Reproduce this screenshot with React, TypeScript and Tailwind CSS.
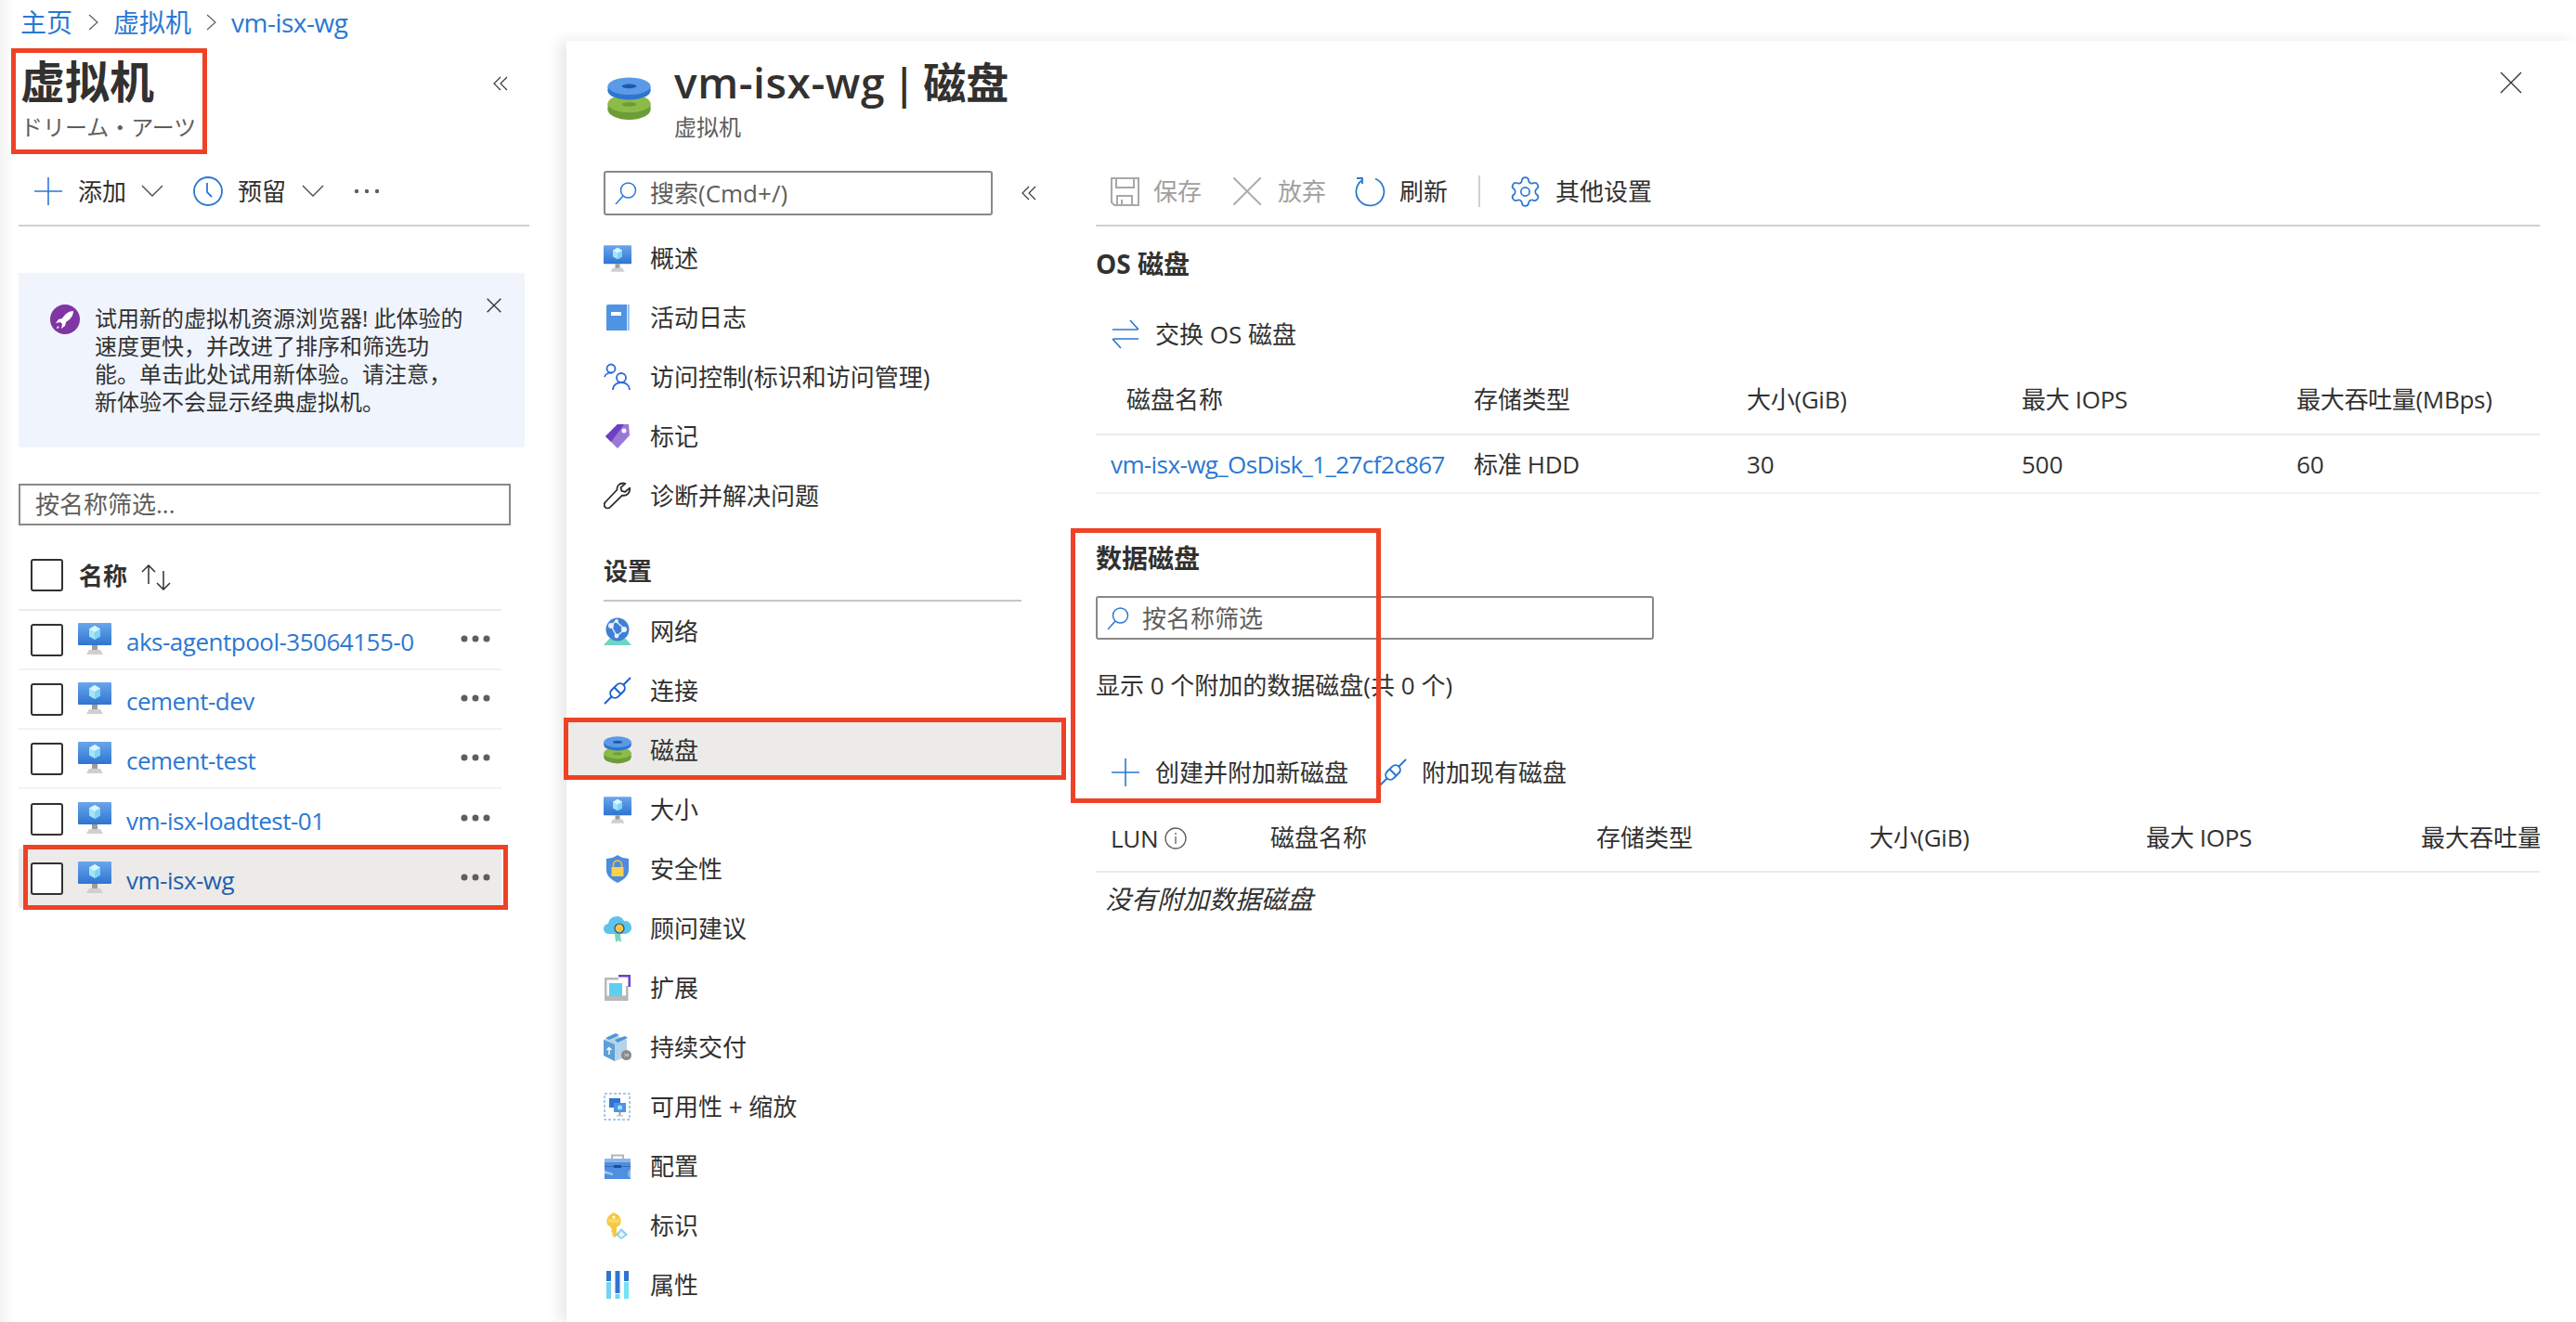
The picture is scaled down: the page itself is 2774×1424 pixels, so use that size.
import { Settings } from "lucide-react";

const BLUE = "#2b78d2";

function CloseIcon({ className, color = "#323130", width = 1.5 }: { className: string; color?: string; width?: number }) {
  return (
    <svg viewBox="0 0 24 24" fill="none" stroke={color} strokeWidth={width} className={`${className} shrink-0`}>
      <path d="M1 1l22 22M23 1 1 23" />
    </svg>
  );
}

function VmIcon({ className = "w-[36px] h-[34px]" }: { className?: string }) {
  return (
    <svg viewBox="0 0 36 34" className={`${className} shrink-0`}>
      <defs>
        <linearGradient id="vmg" x1="0" y1="0" x2="0" y2="1">
          <stop offset="0" stopColor="#6aa6ec" />
          <stop offset="1" stopColor="#2f74d0" />
        </linearGradient>
      </defs>
      <rect x="0" y="0" width="36" height="24" rx="1" fill="url(#vmg)" />
      <polygon points="18,3 24,6.5 24,14.5 18,18 12,14.5 12,6.5" fill="#a5e4fb" />
      <polygon points="18,3 24,6.5 18,10 12,6.5" fill="#d9f5ff" />
      <polygon points="18,10 24,6.5 24,14.5 18,18" fill="#7fd5f5" />
      <rect x="15" y="24" width="6" height="6" fill="#9d9d9d" />
      <polygon points="9,34 27,34 24,29 12,29" fill="#cfcfcf" />
    </svg>
  );
}

function DiskIcon({ className = "w-[30px] h-[30px]" }: { className?: string }) {
  return (
    <svg viewBox="0 0 48 48" className={`${className} shrink-0`}>
      <ellipse cx="24" cy="36" rx="23.5" ry="11" fill="#6d9c38" />
      <rect x="0.5" y="29" width="47" height="7" fill="#6d9c38" />
      <ellipse cx="24" cy="29" rx="23.5" ry="10" fill="#8cbc47" />
      <ellipse cx="24" cy="30" rx="8" ry="2.4" fill="#6d9c38" />
      <ellipse cx="24" cy="15" rx="23.5" ry="10" fill="#2f74d0" />
      <rect x="0.5" y="10" width="47" height="5" fill="#2f74d0" />
      <ellipse cx="24" cy="10" rx="23.5" ry="9.5" fill="#5b9ae6" />
      <ellipse cx="24" cy="10" rx="8" ry="2.4" fill="#1f5aa8" />
    </svg>
  );
}

function BookIcon() {
  return (
    <svg viewBox="0 0 30 30" className="w-[30px] h-[30px] shrink-0">
      <path d="M5 1h20v28H3V3a2 2 0 0 1 2-2z" fill="#4f94e2" />
      <path d="M25 1h2v28h-2z" fill="#d6e8fa" />
      <path d="M27 1v28" stroke="#4f94e2" strokeWidth="1" />
      <rect x="8" y="9" width="11" height="4" fill="#fff" />
    </svg>
  );
}

function PeopleIcon() {
  return (
    <svg viewBox="0 0 30 30" fill="none" stroke="#2a6bd8" strokeWidth="1.8" className="w-[30px] h-[30px] shrink-0">
      <circle cx="8" cy="6" r="4.5" />
      <path d="M1 15c1-3 4-5 8-4" />
      <circle cx="19" cy="16" r="5" />
      <path d="M10 29c0-5 4-8 9-8s9 3 9 8" />
    </svg>
  );
}

function TagIcon() {
  return (
    <svg viewBox="0 0 30 30" className="w-[30px] h-[30px] shrink-0">
      <path d="M2 15 15 2h12l1 12-13 14z" fill="#9a78d8" />
      <path d="M2 15 15 2h7L8 21z" fill="#6c3fc4" />
      <circle cx="22" cy="9" r="2.5" fill="#fff" />
    </svg>
  );
}

function WrenchIcon() {
  return (
    <svg viewBox="0 0 30 30" fill="none" stroke="#2c2c2c" strokeWidth="1.8" strokeLinejoin="round" className="w-[30px] h-[30px] shrink-0">
      <path d="M21 1.5c-4 0-7 3-6.5 7L1.8 22a3.6 3.6 0 0 0 5.2 5.4l13-12.8c5 1 8.8-3 8.2-8l-5 4.2-3.8-1-.9-3.6 4.9-4.4a9 9 0 0 0-2.4-.3z" />
    </svg>
  );
}

function GlobeIcon() {
  return (
    <svg viewBox="0 0 30 30" className="w-[30px] h-[30px] shrink-0">
      <polygon points="0,30 30,30 24,23 6,23" fill="#6fd6c2" />
      <circle cx="15" cy="13" r="12.5" fill="#3f80d6" />
      <g stroke="#dbe9f8" strokeWidth="1.5">
        <path d="M8 9 14 20 23 13 13 4z" fill="none" />
      </g>
      <circle cx="8" cy="9" r="3" fill="#f0f0f0" />
      <circle cx="22" cy="13" r="3" fill="#f0f0f0" />
      <circle cx="14" cy="20" r="2.4" fill="#f0f0f0" />
      <circle cx="14" cy="4" r="2" fill="#f0f0f0" />
    </svg>
  );
}

function PlugIcon({ color = "#2060d0" }: { color?: string }) {
  return (
    <svg viewBox="0 0 30 30" fill="none" stroke={color} strokeWidth="2" className="w-[30px] h-[30px] shrink-0">
      <rect x="6" y="10" width="18" height="10" rx="5" transform="rotate(-45 15 15)" />
      <path d="M11 11 19 19M1 29l7.500-7.500M21.500 8.500 29 1" />
    </svg>
  );
}

function ShieldIcon() {
  return (
    <svg viewBox="0 0 30 30" className="w-[30px] h-[30px] shrink-0">
      <path d="M15 0c4 3 8 3.500 12 4v12c0 7-6 11-12 14C9 27 3 23 3 16V4c4-.5 8-1 12-4z" fill="#4a8cdf" />
      <path d="M10.500 13v-2.500a4.500 4.500 0 0 1 9 0V13" fill="none" stroke="#e8b93a" strokeWidth="1.8" />
      <rect x="8.500" y="13" width="13" height="10" fill="#f8d24c" />
    </svg>
  );
}

function AdvisorIcon() {
  return (
    <svg viewBox="0 0 30 30" className="w-[30px] h-[30px] shrink-0">
      <path d="M6 21a5.500 5.500 0 0 1-1-11 9 9 0 0 1 17-3 7 7 0 0 1 2 14z" fill="#5cc4ea" />
      <path d="M12 21 13 30l3-2 3 2-1-9z" fill="#74d8bd" />
      <circle cx="17" cy="15" r="5" fill="#f6c83e" stroke="#2c4a8c" strokeWidth="1.2" />
    </svg>
  );
}

function ExtensionIcon() {
  return (
    <svg viewBox="0 0 30 30" className="w-[30px] h-[30px] shrink-0">
      <path d="M2 5h15v2.500H4.500v17H25V14h2.500v16H2z" fill="#b8b8b8" transform="translate(-1 -1)" />
      <rect x="6" y="10" width="14" height="14" fill="#5ecfef" />
      <path d="M16 1h13v13h-2.500V3.500H16z" fill="#6b3fd0" />
    </svg>
  );
}

function BoxIcon() {
  return (
    <svg viewBox="0 0 30 30" className="w-[30px] h-[30px] shrink-0">
      <polygon points="0,7 12,2 25,7 25,25 12,30 0,24" fill="#b5d4ec" />
      <polygon points="0,7 12,12 12,30 0,24" fill="#5d9fd8" />
      <polygon points="2,5 13,0 17,2 6,7" fill="#4f94d6" />
      <polygon points="12,7 23,3 26,5 15,10" fill="#4f94d6" />
      <path d="M6 23v-7M3.500 18 6 15.500 8.500 18" stroke="#fff" strokeWidth="1.400" fill="none" />
      <circle cx="24.500" cy="23.500" r="5.500" fill="#8a8a8a" />
      <path d="M22.500 22l2 1.500-2 1.500M25 22l2 1.500-2 1.500" stroke="#fff" strokeWidth="0.800" fill="none" />
    </svg>
  );
}

function ScaleIcon() {
  return (
    <svg viewBox="0 0 30 30" className="w-[30px] h-[30px] shrink-0">
      <rect x="1" y="1" width="27" height="28" fill="none" stroke="#4f94e2" strokeWidth="1" strokeDasharray="3 2" />
      <rect x="6" y="6" width="12" height="10" fill="#2f74d0" />
      <rect x="11" y="11" width="13" height="10" fill="#4f94e2" />
      <circle cx="17.500" cy="16" r="2.500" fill="#a5e4fb" />
      <rect x="16.500" y="21" width="2" height="3" fill="#9d9d9d" />
      <rect x="14" y="24" width="7" height="1.500" fill="#c4c4c4" />
    </svg>
  );
}

function ToolboxIcon() {
  return (
    <svg viewBox="0 0 30 30" className="w-[30px] h-[30px] shrink-0">
      <path d="M9 8V3.500h12V8" fill="none" stroke="#b5b5b5" strokeWidth="2" />
      <rect x="1" y="7" width="28" height="22" fill="#4f8fe0" />
      <rect x="1" y="7" width="28" height="4" fill="#8ab6ec" />
      <rect x="1" y="15" width="28" height="1" fill="#2f6cc0" />
      <rect x="11" y="14" width="8" height="3" fill="#1f4f98" />
      <path d="M1 20l9 3v2l-9-2z" fill="#a6c8f0" />
      <path d="M29 19c-4 0-4 8 0 9z" fill="#8ab6ec" />
    </svg>
  );
}

function KeyIcon() {
  return (
    <svg viewBox="0 0 30 30" className="w-[30px] h-[30px] shrink-0">
      <path d="M11 1c6 3 9 6 7 13l-4 3v9l-2 2-3-3 1-2-2-1 1-2-1-2V17L4 14C2 8 5 4 11 1z" fill="#f6c83e" />
      <circle cx="11" cy="6" r="1.500" fill="#fff" />
      <path d="M5 9h12M5 11h12" stroke="#fbe7a0" strokeWidth="1" />
      <polygon points="19,18 26,25 19,30 13,25" fill="#8fcdf0" />
      <polygon points="19,21 23,25 19,28 16,25" fill="#e6f5fd" />
    </svg>
  );
}

function BarsIcon() {
  return (
    <svg viewBox="0 0 30 30" className="w-[30px] h-[30px] shrink-0">
      <rect x="3" y="0" width="5" height="11" fill="#2f74d0" />
      <rect x="3" y="12" width="5" height="18" fill="#72d4ee" />
      <rect x="12.500" y="0" width="5" height="24" fill="#2f74d0" />
      <rect x="12.500" y="25" width="5" height="5" fill="#72d4ee" />
      <rect x="22" y="0" width="5" height="11" fill="#2f74d0" />
      <rect x="22" y="12" width="5" height="18" fill="#72e4f6" />
    </svg>
  );
}

function RocketBadge() {
  return (
    <svg viewBox="0 0 32 32" className="w-[32px] h-[32px] shrink-0">
      <circle cx="16" cy="16" r="16" fill="#7f35a3" />
      <path d="M25 7c-5 0-9 3-12 8l-4 1-3 4 5-1 2 2-1 5 4-3 1-4c5-3 8-7 8-12z" fill="#fff" />
      <path d="M8 23l-1 3 3-1z" fill="#fff" />
    </svg>
  );
}

function PlusIcon({ className }: { className: string }) {
  return (
    <svg viewBox="0 0 30 30" fill="none" stroke={BLUE} strokeWidth="1.6" className={`${className} shrink-0`}>
      <path d="M15 0v30M0 15h30" />
    </svg>
  );
}

function Chevron() {
  return (
    <svg viewBox="0 0 24 13" fill="none" stroke="#4a4a4a" strokeWidth="1.4" className="w-[24px] h-[13px] shrink-0">
      <path d="M1 1l11 11L23 1" />
    </svg>
  );
}

function ClockIcon() {
  return (
    <svg viewBox="0 0 32 32" fill="none" stroke={BLUE} strokeWidth="1.8" className="w-[32px] h-[32px] shrink-0">
      <circle cx="16" cy="16" r="15" />
      <path d="M15 7v10l5 5" />
    </svg>
  );
}

function DoubleLeft({ className }: { className: string }) {
  return (
    <svg viewBox="0 0 16 16" fill="none" stroke="#323130" strokeWidth="1.1" className={`${className} shrink-0`}>
      <path d="M8 1 1 8l7 7M15 1 8 8l7 7" />
    </svg>
  );
}

function SearchIcon() {
  return (
    <svg viewBox="0 0 24 24" fill="none" stroke={BLUE} strokeWidth="1.500" className="w-[24px] h-[24px] shrink-0">
      <circle cx="14.500" cy="9" r="8" />
      <path d="M9 15 1 24" />
    </svg>
  );
}

function SaveIcon() {
  return (
    <svg viewBox="0 0 33 33" fill="none" stroke="#a8a8a8" strokeWidth="2" className="w-[33px] h-[33px] shrink-0">
      <path d="M2 2h29v29H5l-3-3z" />
      <path d="M7 2v10h19V2M8 31V21h16v10M13 31v-6" />
    </svg>
  );
}

function RefreshIcon() {
  return (
    <svg viewBox="0 0 34 34" fill="none" stroke={BLUE} strokeWidth="1.800" className="w-[34px] h-[34px] shrink-0">
      <path d="M23 3.500a15 15 0 1 1-14 1.500" />
      <path d="M3 3h6v6" />
    </svg>
  );
}

function SwapIcon() {
  return (
    <svg viewBox="0 0 30 32" fill="none" stroke={BLUE} strokeWidth="1.700" className="w-[30px] h-[32px] shrink-0">
      <path d="M1 11h27M20 1l9 10M29 21H2M10 31 1 21" />
    </svg>
  );
}

function SortIcon() {
  return (
    <svg viewBox="0 0 32 28" fill="none" stroke="#323130" strokeWidth="1.500" className="w-[32px] h-[28px] shrink-0">
      <path d="M8 21V1M1 8l7-7 7 7M24 7v20M17 20l7 7 7-7" />
    </svg>
  );
}

function InfoIcon() {
  return (
    <svg viewBox="0 0 24 24" fill="none" stroke="#605e5c" strokeWidth="1.300" className="w-[24px] h-[24px] shrink-0">
      <circle cx="12" cy="12" r="11" />
      <path d="M12 10v8M12 6v2" />
    </svg>
  );
}

function Dots({ small }: { small?: boolean }) {
  if (small) {
    return (
      <svg viewBox="0 0 28 6" className="w-[28px] h-[6px] shrink-0" fill="#605e5c">
        <circle cx="3" cy="3" r="2.200" />
        <circle cx="14" cy="3" r="2.200" />
        <circle cx="25" cy="3" r="2.200" />
      </svg>
    );
  }
  return (
    <svg viewBox="0 0 32 8" className="w-[32px] h-[8px] shrink-0" fill="#605e5c">
      <circle cx="4" cy="4" r="3.500" />
      <circle cx="16" cy="4" r="3.500" />
      <circle cx="28" cy="4" r="3.500" />
    </svg>
  );
}

function Checkbox() {
  return <div className="w-[35px] h-[35px] shrink-0 bg-white border-2 border-[#323130] rounded-[3px]" />;
}

function RedBox({ className }: { className: string }) {
  return <div className={`absolute border-[5px] border-[#ee4226] pointer-events-none ${className}`} />;
}

const VMS = ["aks-agentpool-35064155-0", "cement-dev", "cement-test", "vm-isx-loadtest-01", "vm-isx-wg"];

function VmList() {
  return (
    <aside className="w-[610px] shrink-0 pl-[20px] bg-[linear-gradient(90deg,#f3f3f3,#ffffff_16px)]">
      {/* Breadcrumb */}
      <nav className="h-[48px] flex items-center text-[28px] text-[#2b78d2] pl-[2px]">
        <span>主页</span>
        <svg viewBox="0 0 11 18" fill="none" stroke="#605e5c" strokeWidth="1.2" className="w-[11px] h-[18px] ml-[17px] mr-[16px]"><path d="M1 1l9 8-9 8" /></svg>
        <span>虚拟机</span>
        <svg viewBox="0 0 11 18" fill="none" stroke="#605e5c" strokeWidth="1.2" className="w-[11px] h-[18px] ml-[16px] mr-[16px]"><path d="M1 1l9 8-9 8" /></svg>
        <span className="tracking-[-0.5px]">vm-isx-wg</span>
      </nav>

      {/* Title */}
      <div className="relative h-[105px] w-[550px] flex justify-between">
        <RedBox className="left-[-8px] top-[4px] w-[211px] h-[114px]" />
        <div className="pt-[11px] pl-[2px]">
          <h1 className="text-[48px] leading-[58px] font-bold text-[#323130]">虚拟机</h1>
          <p className="text-[24px] leading-[32px] mt-[4px] text-[#605e5c]">ドリーム・アーツ</p>
        </div>
        <DoubleLeft className="w-[16px] h-[16px] mt-[34px] mr-[23px]" />
      </div>

      {/* Toolbar */}
      <div className="h-[91px] w-[550px] border-b-2 border-[#d2d0ce] flex items-center pt-[16px] pl-[17px] text-[26px] text-[#323130]">
        <PlusIcon className="w-[30px] h-[30px]" />
        <span className="ml-[17px]">添加</span>
        <span className="ml-[16px]"><Chevron /></span>
        <span className="ml-[32px]"><ClockIcon /></span>
        <span className="ml-[16px]">预留</span>
        <span className="ml-[17px]"><Chevron /></span>
        <span className="ml-[32px]"><Dots small /></span>
      </div>

      {/* Banner */}
      <div className="relative mt-[50px] w-[545px] h-[188px] bg-[#eff4fd] rounded-[2px] flex pl-[34px] pt-[34px] gap-[16px]">
        <RocketBadge />
        <p className="text-[24px] leading-[30px] text-[#323130] whitespace-nowrap">
          试用新的虚拟机资源浏览器! 此体验的<br />
          速度更快，并改进了排序和筛选功<br />
          能。单击此处试用新体验。请注意，<br />
          新体验不会显示经典虚拟机。
        </p>
        <CloseIcon className="absolute right-[25px] top-[27px] w-[16px] h-[16px]" width={2} />
      </div>

      {/* Filter */}
      <div className="mt-[39px] w-[530px] h-[45px] border-2 border-[#8a8886] flex items-center pl-[16px] pb-[2px] text-[26px] text-[#605e5c]">
        按名称筛选...
      </div>

      {/* List */}
      <div className="w-[520px] h-[92px] pt-[36px] border-b-2 border-[#edebe9] flex items-start pl-[13px] text-[26px]">
        <Checkbox />
        <span className="ml-[17px] mt-[2px] font-bold text-[#323130]">名称</span>
        <span className="ml-[15px] mt-[6px]"><SortIcon /></span>
      </div>
      {VMS.map((vm, i) => {
        const selected = vm === "vm-isx-wg";
        return (
          <div
            key={vm}
            className={`relative w-[520px] h-[64px] flex items-center pl-[13px] pr-[12px] text-[26px] ${
              selected ? "bg-[#edebe9] text-[#1f5fae]" : "text-[#2b78d2]"
            } ${i < VMS.length - 2 ? "border-b-2 border-[#f3f2f1]" : ""}`}
          >
            {selected && <RedBox className="left-[5px] right-[-7px] top-[-4px] bottom-[-2px]" />}
            <Checkbox />
            <span className="ml-[16px] -mt-[2px]"><VmIcon /></span>
            <span className="ml-[16px] mt-[4px] tracking-[-0.5px]">{vm}</span>
            <span className="ml-auto -mt-[2px]"><Dots /></span>
          </div>
        );
      })}
    </aside>
  );
}

const MENU_TOP = [
  { label: "概述", icon: <VmIcon className="w-[30px] h-[29px]" /> },
  { label: "活动日志", icon: <BookIcon /> },
  { label: "访问控制(标识和访问管理)", icon: <PeopleIcon /> },
  { label: "标记", icon: <TagIcon /> },
  { label: "诊断并解决问题", icon: <WrenchIcon /> },
];

const MENU_SETTINGS = [
  { label: "网络", icon: <GlobeIcon /> },
  { label: "连接", icon: <PlugIcon /> },
  { label: "磁盘", icon: <DiskIcon />, selected: true },
  { label: "大小", icon: <VmIcon className="w-[30px] h-[29px]" /> },
  { label: "安全性", icon: <ShieldIcon /> },
  { label: "顾问建议", icon: <AdvisorIcon /> },
  { label: "扩展", icon: <ExtensionIcon /> },
  { label: "持续交付", icon: <BoxIcon /> },
  { label: "可用性 + 缩放", icon: <ScaleIcon /> },
  { label: "配置", icon: <ToolboxIcon /> },
  { label: "标识", icon: <KeyIcon /> },
  { label: "属性", icon: <BarsIcon /> },
];

function MenuRow({ label, icon, selected }: { label: string; icon: React.ReactNode; selected?: boolean }) {
  return (
    <div
      className={`relative h-[64px] flex items-center gap-[20px] text-[26px] text-[#323130] ${
        selected ? "bg-[#edebe9] -ml-[40px] pl-[40px] w-[538px]" : "w-[498px]"
      }`}
    >
      {selected && <RedBox className="left-[-3px] right-0 top-[-3px] bottom-0" />}
      {icon}
      <span>{label}</span>
    </div>
  );
}

function ResourceMenu() {
  return (
    <div className="w-[570px] shrink-0 pl-[40px]">
      <div className="mt-[18px] flex items-center">
        <div className="w-[419px] h-[48px] border-2 border-[#8a8886] rounded-[3px] flex items-center pl-[10px] gap-[14px] text-[26px] text-[#605e5c]">
          <SearchIcon />
          <span>搜索(Cmd+/)</span>
        </div>
        <DoubleLeft className="w-[16px] h-[16px] ml-[31px]" />
      </div>
      <div className="mt-[14px]">
        {MENU_TOP.map((m) => (
          <MenuRow key={m.label} label={m.label} icon={m.icon} />
        ))}
      </div>
      <div className="h-[82px] w-[450px] border-b-2 border-[#c8c6c4] flex items-end pb-[15px] text-[26px] font-bold text-[#323130]">设置</div>
      {MENU_SETTINGS.map((m) => (
        <MenuRow key={m.label} label={m.label} icon={m.icon} selected={m.selected} />
      ))}
    </div>
  );
}

function DiskContent() {
  return (
    <div className="relative w-[1555px] shrink-0">
      <div className="overflow-hidden text-[26px] text-[#323130] whitespace-nowrap">
        {/* Command bar */}
        <div className="h-[78px] pt-[4px] border-b-2 border-[#d2d0ce] flex items-center pl-[15px]">
          <SaveIcon />
          <span className="ml-[14px] text-[#a19f9d]">保存</span>
          <CloseIcon className="ml-[33px] w-[32px] h-[32px]" color="#a8a8a8" width={1.5} />
          <span className="ml-[17px] text-[#a19f9d]">放弃</span>
          <span className="ml-[30px]"><RefreshIcon /></span>
          <span className="ml-[15px]">刷新</span>
          <span className="ml-[33px] w-[2px] h-[34px] bg-[#d2d0ce]" />
          <Settings strokeWidth={1.1} className="ml-[30px] w-[37px] h-[37px] text-[#2b78d2]" />
          <span className="ml-[14px]">其他设置</span>
        </div>

        <h2 className="mt-[22px] h-[36px] leading-[36px] text-[28px] font-bold">OS 磁盘</h2>
        <div className="mt-[28px] h-[60px] flex items-center pl-[17px] gap-[17px]">
          <SwapIcon />
          <span>交换 OS 磁盘</span>
        </div>

        {/* OS disk table */}
        <div className="grid grid-cols-[407px_294px_296px_296px_1fr] h-[79px] pt-[2px] items-center border-b-2 border-[#edebe9]">
          <span className="pl-[33px]">磁盘名称</span>
          <span>存储类型</span>
          <span className="tracking-[-0.3px]">大小(GiB)</span>
          <span className="tracking-[-0.3px]">最大 IOPS</span>
          <span className="tracking-[-0.3px]">最大吞吐量(MBps)</span>
        </div>
        <div className="grid grid-cols-[407px_294px_296px_296px_1fr] h-[63px] items-center border-b-2 border-[#f3f2f1]">
          <span className="pl-[16px] text-[#2b78d2] tracking-[-0.6px]">vm-isx-wg_OsDisk_1_27cf2c867</span>
          <span className="tracking-[-0.3px]">标准 HDD</span>
          <span>30</span>
          <span>500</span>
          <span>60</span>
        </div>

        {/* Data disks */}
        <h2 className="mt-[51px] h-[36px] leading-[36px] text-[28px] font-bold">数据磁盘</h2>
        <div className="mt-[23px] w-[601px] h-[47px] border-2 border-[#8a8886] rounded-[3px] flex items-center pl-[10px] gap-[14px] text-[#605e5c]">
          <SearchIcon />
          <span>按名称筛选</span>
        </div>
        <p className="mt-[33px] leading-[32px]">显示 0 个附加的数据磁盘(共 0 个)</p>
        <div className="mt-[48px] h-[60px] flex items-center pl-[17px]">
          <PlusIcon className="w-[30px] h-[30px]" />
          <span className="ml-[17px]">创建并附加新磁盘</span>
          <span className="ml-[33px]"><PlugIcon color="#2b78d2" /></span>
          <span className="ml-[16px]">附加现有磁盘</span>
        </div>
        <div className="grid grid-cols-[188px_351px_294px_298px_296px_1fr] h-[78px] pt-[4px] items-center border-b-2 border-[#edebe9]">
          <span className="pl-[16px] flex items-center gap-[7px] tracking-[-0.3px] pt-[2px]">LUN <InfoIcon /></span>
          <span>磁盘名称</span>
          <span>存储类型</span>
          <span className="tracking-[-0.3px]">大小(GiB)</span>
          <span className="tracking-[-0.3px]">最大 IOPS</span>
          <span>最大吞吐量(MBps)</span>
        </div>
        <p className="h-[56px] leading-[56px] pl-[10px] italic text-[28px]">没有附加数据磁盘</p>
      </div>

      <RedBox className="left-[-27px] top-[403px] w-[334px] h-[296px]" />
    </div>
  );
}

export default function App() {
  return (
    <div className="relative flex w-[2774px] h-[1424px] overflow-hidden bg-white font-['Open_Sans','Noto_Sans_CJK_SC',sans-serif] leading-[32px]">
      <VmList />
      <main className="relative flex-1 mt-[44px] bg-white shadow-[-8px_0_14px_rgba(0,0,0,0.09)]">
        {/* Blade header */}
        <header className="h-[122px] flex pl-[44px] pr-[58px]">
          <DiskIcon className="w-[47px] h-[47px] mt-[39px]" />
          <div className="ml-[25px] pt-[15px] flex-1">
            <h1 className="text-[46px] leading-[58px] font-semibold text-[#323130] [word-spacing:-4px]">
              <span className="tracking-[0.6px]">vm-isx-wg</span> | 磁盘
            </h1>
            <p className="text-[24px] leading-[32px] mt-[4px] text-[#605e5c]">虚拟机</p>
          </div>
          <CloseIcon className="w-[24px] h-[24px] mt-[33px]" width={1.3} />
        </header>
        <div className="flex">
          <ResourceMenu />
          <DiskContent />
        </div>
      </main>
    </div>
  );
}
